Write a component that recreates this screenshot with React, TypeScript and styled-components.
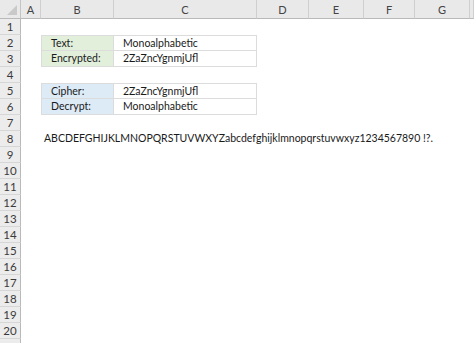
import styled, { createGlobalStyle } from "styled-components";

const GlobalStyle = createGlobalStyle`
  html, body {
    margin: 0;
    background: #fff;
  }
  body {
    font-family: Lato, "Carlito", "Liberation Sans", sans-serif;
    color: #1a1a1a;
  }
`;

type Fill = "green" | "blue" | undefined;

interface CellData {
    text: string;
    fill?: Fill;
    boxed?: boolean;
    first?: boolean;
    left?: boolean;
    indent?: number;
    span?: number;
}

// last column is only a sliver at the right edge, its letter is off-screen
const columns = [
    { name: "A", width: "20px" },
    { name: "B", width: "73px" },
    { name: "C", width: "143px" },
    { name: "D", width: "52px" },
    { name: "E", width: "55px" },
    { name: "F", width: "51px" },
    { name: "G", width: "55px" },
    { name: "", width: "1fr" },
];

const sheetData: Record<number, Record<string, CellData>> = {
    2: {
        B: { text: "Text:", fill: "green", boxed: true, first: true, left: true },
        C: { text: "Monoalphabetic", boxed: true, first: true },
    },
    3: {
        B: { text: "Encrypted:", fill: "green", boxed: true, left: true },
        C: { text: "2ZaZncYgnmjUfl", boxed: true },
    },
    5: {
        B: { text: "Cipher:", fill: "blue", boxed: true, first: true, left: true },
        C: { text: "2ZaZncYgnmjUfl", boxed: true, first: true },
    },
    6: {
        B: { text: "Decrypt:", fill: "blue", boxed: true, left: true },
        C: { text: "Monoalphabetic", boxed: true },
    },
    8: {
        // long text spills over into the empty cells B..G
        B: {
            text: "ABCDEFGHIJKLMNOPQRSTUVWXYZabcdefghijklmnopqrstuvwxyz1234567890 !?.",
            indent: 3,
            span: 6,
        },
    },
};

const visibleRows = 20;

const fills = {
    green: "#e2efda",
    blue: "#ddebf7",
};

export default function App() {
    const rows = Array.from({ length: visibleRows }, (_, i) => i + 1);

    return (
        <>
            <GlobalStyle />
            <Sheet $cols={columns.map((c) => c.width)}>
                <Corner />
                {columns.map((col, i) => (
                    <ColHeader key={i}>{col.name}</ColHeader>
                ))}

                {rows.map((row) => (
                    <RowFragment key={row} row={row} />
                ))}
                {/* row 21 peeks in at the bottom edge */}
                <RowFragment row={21} hideLabel />
            </Sheet>
        </>
    );
}

const RowFragment = ({ row, hideLabel }: { row: number; hideLabel?: boolean }) => {
    const data = sheetData[row] || {};
    const cells = [];
    let i = 0;

    while (i < columns.length) {
        const cell = data[columns[i].name];
        if (!cell) {
            cells.push(<Cell key={i} />);
            i++;
            continue;
        }
        const span = cell.span ?? 1;
        cells.push(
            <Cell
                key={i}
                $fill={cell.fill}
                $boxed={cell.boxed}
                $first={cell.first}
                $left={cell.left}
                $indent={cell.indent ?? 9}
                $span={span}
            >
                {cell.text}
            </Cell>
        );
        i += span;
    }

    return (
        <>
            <RowHeader>{hideLabel ? "" : row}</RowHeader>
            {cells}
        </>
    );
};

const Sheet = styled.div<{ $cols: string[] }>`
    display: grid;
    grid-template-columns: 21px ${(p) => p.$cols.join(" ")};
    grid-template-rows: 19px;
    grid-auto-rows: 16px;
    width: 474px;
    height: 343px;
    overflow: hidden;
`;

const Corner = styled.div`
    position: relative;
    background: #e9e9e9;
    border-right: 1px solid #c4c4c4;
    border-bottom: 1px solid #b9b9b9;
    box-sizing: border-box;

    &::after {
        content: "";
        position: absolute;
        right: 3px;
        bottom: 3px;
        width: 0;
        height: 0;
        border-left: 10px solid transparent;
        border-bottom: 10px solid #c9c9c9;
    }
`;

const ColHeader = styled.div`
    display: flex;
    align-items: center;
    justify-content: center;
    background: #e9e9e9;
    color: #444;
    font-size: 11px;
    border-right: 1px solid #cfcfcf;
    border-bottom: 1px solid #b9b9b9;
    box-sizing: border-box;
    padding-top: 1px;
`;

const RowHeader = styled.div`
    display: flex;
    align-items: center;
    justify-content: center;
    background: #ececec;
    color: #3a3a3a;
    font-size: 11.5px;
    border-right: 1px solid #b9b9b9;
    border-bottom: 1px solid #d6d6d6;
    box-sizing: border-box;
`;

const Cell = styled.div<{
    $fill?: Fill;
    $boxed?: boolean;
    $first?: boolean;
    $left?: boolean;
    $indent?: number;
    $span?: number;
}>`
    display: block;
    min-width: 0;
    grid-column: span ${(p) => p.$span ?? 1};
    box-sizing: border-box;
    padding-left: ${(p) => p.$indent ?? 0}px;
    line-height: 15px;
    font-size: 10.5px;
    white-space: nowrap;
    color: #1a1a1a;
    background: ${(p) => (p.$fill ? fills[p.$fill] : "transparent")};
    border-right: ${(p) => (p.$boxed ? "1px solid #dcdcdc" : "none")};
    border-bottom: ${(p) => (p.$boxed ? "1px solid #dcdcdc" : "none")};
    border-top: ${(p) => (p.$first ? "1px solid #dcdcdc" : "none")};
    border-left: ${(p) => (p.$left ? "1px solid #dcdcdc" : "none")};
`;
